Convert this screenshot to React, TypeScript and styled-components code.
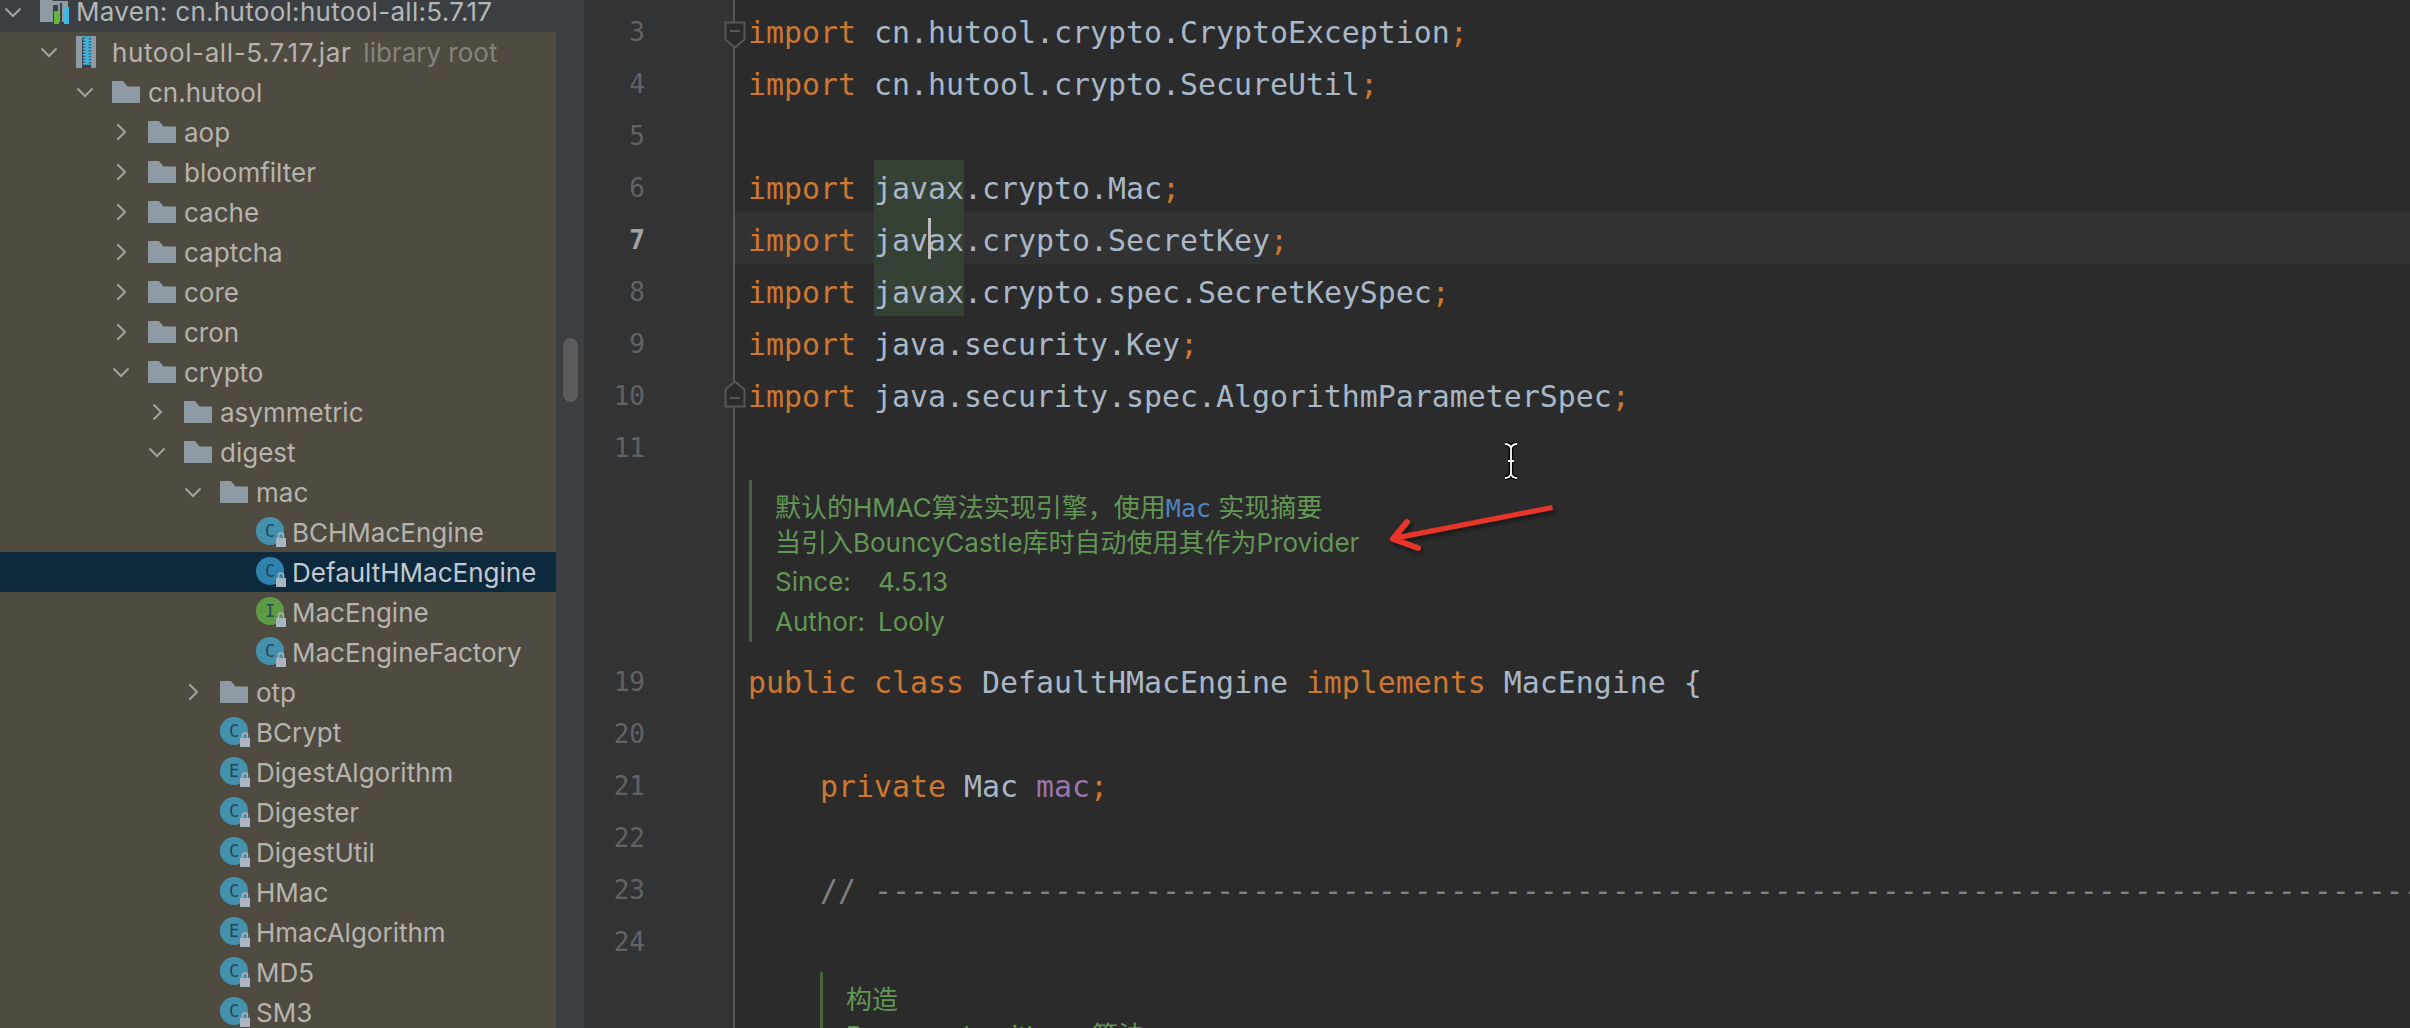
import React from 'react';
import styled, { createGlobalStyle } from 'styled-components';

const GlobalStyle = createGlobalStyle`
  html, body {
    margin: 0;
    padding: 0;
    background: #2b2b2b;
  }
  * {
    box-sizing: border-box;
  }
`;

const uiFont = `Inter, "Noto Sans CJK SC", sans-serif`;
const monoFont = `"DejaVu Sans Mono", "Noto Sans CJK SC", monospace`;

// Page shell
const Page = styled.div`
  position: relative;
  display: flex;
  width: 2410px;
  height: 1028px;
  overflow: hidden;
  background: #2b2b2b;
`;

// Project tree
const Sidebar = styled.div`
  display: flex;
  flex: 0 0 584px;
  background: #3c3f41;
`;

const TreePanel = styled.div`
  flex: 0 0 556px;
  font-family: ${uiFont};
  font-size: 26px;
`;

const TreeBody = styled.div`
  background: #4f4b41;
`;

const TreeRow = styled.div<{ $level: number; $selected?: boolean }>`
  display: flex;
  align-items: center;
  height: 40px;
  padding-left: ${(p) => p.$level * 36}px;
  white-space: nowrap;
  color: ${(p) => (p.$selected ? '#c3c9ce' : '#b6b4ae')};
  background: ${(p) => (p.$selected ? '#0d293e' : 'transparent')};
`;

const HeaderRow = styled(TreeRow)`
  height: 32px;
  padding-bottom: 8px;
  line-height: 24px;
`;

const ChevronSlot = styled.div`
  display: flex;
  flex: 0 0 40px;
  justify-content: center;
  padding-right: 14px;
`;

const IconSlot = styled.div`
  display: flex;
  flex: 0 0 36px;
  align-items: center;
`;

const TreeLabel = styled.span<{ $spacing?: number }>`
  padding-top: 1px;
  letter-spacing: ${(p) => p.$spacing ?? 0}px;
`;

const HeaderLabel = styled.span`
  color: #b4b7b8;
  letter-spacing: 0.3px;
`;

const Hint = styled.span`
  margin-left: 12px;
  padding-top: 1px;
  color: #85837c;
`;

const Badge = styled.div<{ $bg: string }>`
  position: relative;
  display: flex;
  align-items: center;
  justify-content: center;
  width: 28px;
  height: 28px;
  margin-top: -3px;
  border-radius: 50%;
  background: ${(p) => p.$bg};
  color: #24475a;
  font-family: ${monoFont};
  font-size: 17px;
`;

const LockMark = styled.svg`
  position: absolute;
  top: 15px;
  left: 20px;
`;

const ScrollStrip = styled.div`
  flex: 0 0 28px;
  padding: 337px 5px 0 6px;
`;

const ScrollThumb = styled.div`
  width: 17px;
  height: 66px;
  border: 1px solid #37393b;
  border-radius: 9px;
  background: #5a5b5d;
`;

// Line numbers
const Gutter = styled.div`
  flex: 0 0 151px;
  padding: 4px 88px 0 0;
  border-right: 2px solid #555658;
  background: #323335;
  color: #606366;
  font-family: ${monoFont};
  font-size: 26px;
  text-align: right;
`;

const LineNo = styled.div<{ $current?: boolean; $gap?: number }>`
  height: 52px;
  margin-bottom: ${(p) => p.$gap ?? 0}px;
  line-height: 57px;
  color: ${(p) => (p.$current ? '#a4a3a3' : '#606366')};
  font-weight: ${(p) => (p.$current ? 700 : 400)};
`;

// Editor
const Editor = styled.div`
  flex: 1;
  padding-top: 4px;
  font-family: ${monoFont};
  font-size: 29.9px;
  color: #a9b7c6;
`;

const CodeLine = styled.div<{ $current?: boolean }>`
  position: relative;
  height: 52px;
  padding-left: 13px;
  line-height: 57px;
  white-space: pre;
  background: ${(p) => (p.$current ? '#323232' : 'transparent')};
`;

const Kw = styled.span`
  color: #cc7832;
`;

const FieldName = styled.span`
  color: #9876aa;
`;

const Comment = styled.span`
  color: #808080;
`;

const Match = styled.span`
  position: relative;
  display: inline-block;
  height: 52px;
  background: #344134;
`;

const Caret = styled.i`
  position: absolute;
  top: 6px;
  left: 54px;
  width: 3px;
  height: 41px;
  background: #bbbbbb;
`;

const FoldMark = styled.svg<{ $top: number }>`
  position: absolute;
  top: ${(p) => p.$top}px;
  left: -11px;
`;

const DocBlock = styled.div<{ $indent: number; $top: number; $bottom: number }>`
  margin: ${(p) => p.$top}px 0 ${(p) => p.$bottom}px ${(p) => p.$indent}px;
  border-left: 3px solid #47643f;
  color: #629755;
  font-family: ${uiFont};
  font-size: 26px;
  white-space: nowrap;
`;

const DocText = styled.div`
  height: 35px;
  padding-left: 23px;
  line-height: 35px;
`;

const DocLead = styled.div<{ $top: number; $height: number }>`
  height: ${(p) => p.$height}px;
  padding-top: ${(p) => p.$top}px;
`;

const DocTag = styled.div`
  display: flex;
  height: 40px;
  padding-left: 23px;
  line-height: 40px;
`;

const DocTagLabel = styled.span`
  flex: 0 0 103px;
`;

const DocLink = styled.span`
  color: #4f86c6;
  font-family: ${monoFont};
  font-size: 25px;
`;

// Annotations sitting on top of the screenshot
const MouseCursor = styled.svg`
  position: absolute;
  top: 442px;
  left: 1502px;
`;

const RedArrow = styled.svg`
  position: absolute;
  top: 495px;
  left: 1380px;
  filter: drop-shadow(2px 3px 2px rgba(0, 0, 0, 0.45));
`;

const ChevronDown = () => (
  <svg width="18" height="11" viewBox="0 0 18 11" fill="none">
    <path d="M1.5 1.5 9 9l7.5-7.5" stroke="#a3a3a0" strokeWidth="2" />
  </svg>
);

const ChevronRight = () => (
  <svg width="11" height="18" viewBox="0 0 11 18" fill="none">
    <path d="M1.5 1.5 9 9l-7.5 7.5" stroke="#a3a3a0" strokeWidth="2" />
  </svg>
);

const FolderIcon = () => (
  <svg width="28" height="22" viewBox="0 0 28 22">
    <path d="M0 0h11l4.5 5.5H28V22H0z" fill="#8f9ba4" />
  </svg>
);

const MavenIcon = () => (
  <svg width="30" height="24" viewBox="0 3 30 24">
    <path d="M0 0h9l4 4h15v21H0z" fill="#8f9ba4" />
    <rect x="13" y="8" width="5" height="17" fill="#3e4144" />
    <rect x="14" y="14" width="5" height="13" fill="#62b543" />
    <rect x="20" y="6" width="2" height="21" fill="#3e4144" />
    <rect x="24" y="10" width="5" height="17" fill="#40b6e0" />
  </svg>
);

const JarIcon = () => (
  <svg width="20" height="32" viewBox="0 0 20 32">
    <rect width="20" height="32" fill="#8f9ba4" />
    <rect x="6" width="9" height="32" fill="#3c3f41" />
    <path
      d="M6 1h9L7 4h8L7 7h8l-8 3h8l-8 3h8l-8 3h8l-8 3h8l-8 3h8l-8 3h8l-8 3h8"
      fill="none"
      stroke="#40b6e0"
      strokeWidth="1.6"
    />
  </svg>
);

type BadgeKind = 'C' | 'E' | 'I';

const ClassBadge = ({ kind, selected }: { kind: BadgeKind; selected?: boolean }) => {
  const bg = kind === 'I' ? '#5d9b42' : selected ? '#2f82ad' : '#4491ae';
  return (
    <Badge $bg={bg}>
      {kind}
      <LockMark width="10" height="15" viewBox="0 0 10 15">
        <path d="M2.5 7V3.5a2.5 2.5 0 0 1 5 0V7" fill="none" stroke="#a9b5c0" strokeWidth="1.6" />
        <rect y="6" width="10" height="9" fill="#a9b5c0" />
      </LockMark>
    </Badge>
  );
};

type Node = {
  level: number;
  label: string;
  open?: boolean;
  badge?: BadgeKind;
  selected?: boolean;
};

const nodes: Node[] = [
  { level: 2, label: 'cn.hutool', open: true },
  { level: 3, label: 'aop', open: false },
  { level: 3, label: 'bloomfilter', open: false },
  { level: 3, label: 'cache', open: false },
  { level: 3, label: 'captcha', open: false },
  { level: 3, label: 'core', open: false },
  { level: 3, label: 'cron', open: false },
  { level: 3, label: 'crypto', open: true },
  { level: 4, label: 'asymmetric', open: false },
  { level: 4, label: 'digest', open: true },
  { level: 5, label: 'mac', open: true },
  { level: 6, label: 'BCHMacEngine', badge: 'C' },
  { level: 6, label: 'DefaultHMacEngine', badge: 'C', selected: true },
  { level: 6, label: 'MacEngine', badge: 'I' },
  { level: 6, label: 'MacEngineFactory', badge: 'C' },
  { level: 5, label: 'otp', open: false },
  { level: 5, label: 'BCrypt', badge: 'C' },
  { level: 5, label: 'DigestAlgorithm', badge: 'E' },
  { level: 5, label: 'Digester', badge: 'C' },
  { level: 5, label: 'DigestUtil', badge: 'C' },
  { level: 5, label: 'HMac', badge: 'C' },
  { level: 5, label: 'HmacAlgorithm', badge: 'E' },
  { level: 5, label: 'MD5', badge: 'C' },
  { level: 5, label: 'SM3', badge: 'C' },
];

const Fold = ({ up, top }: { up?: boolean; top: number }) => (
  <FoldMark $top={top} width="22" height="28" viewBox="0 0 22 28">
    <path
      d={up ? 'M1.5 26.5V9.5L11 1.5l9.5 8v17z' : 'M1.5 1.5h19v17L11 26.5l-9.5-8z'}
      fill="#2b2b2b"
      stroke="#555658"
      strokeWidth="2"
    />
    <path d={up ? 'M6 18h10' : 'M6 10h10'} stroke="#555658" strokeWidth="2" />
  </FoldMark>
);

const lineNumbers = [3, 4, 5, 6, 7, 8, 9, 10, 11, 19, 20, 21, 22, 23, 24];

const beamPath = 'M3 2c3 0 5 1 6 4v26c-1 3-3 4-6 4M15 2c-3 0-5 1-6 4v26c1 3 3 4 6 4M6 19h6';

export default function App() {
  return (
    <Page>
      <GlobalStyle />
      <Sidebar>
        <TreePanel>
          <HeaderRow $level={0}>
            <ChevronSlot>
              <ChevronDown />
            </ChevronSlot>
            <IconSlot>
              <MavenIcon />
            </IconSlot>
            <HeaderLabel>Maven: cn.hutool:hutool-all:5.7.17</HeaderLabel>
          </HeaderRow>
          <TreeBody>
            <TreeRow $level={1}>
              <ChevronSlot>
                <ChevronDown />
              </ChevronSlot>
              <IconSlot>
                <JarIcon />
              </IconSlot>
              <TreeLabel $spacing={0.6}>hutool-all-5.7.17.jar</TreeLabel>
              <Hint>library root</Hint>
            </TreeRow>
            {nodes.map((node) => (
              <TreeRow key={node.label} $level={node.level} $selected={node.selected}>
                <ChevronSlot>
                  {node.open === true && <ChevronDown />}
                  {node.open === false && <ChevronRight />}
                </ChevronSlot>
                <IconSlot>
                  {node.badge ? (
                    <ClassBadge kind={node.badge} selected={node.selected} />
                  ) : (
                    <FolderIcon />
                  )}
                </IconSlot>
                <TreeLabel>{node.label}</TreeLabel>
              </TreeRow>
            ))}
          </TreeBody>
        </TreePanel>
        <ScrollStrip>
          <ScrollThumb />
        </ScrollStrip>
      </Sidebar>

      <Gutter>
        {lineNumbers.map((n) => (
          <LineNo key={n} $current={n === 7} $gap={n === 11 ? 182 : 0}>
            {n}
          </LineNo>
        ))}
      </Gutter>

      <Editor>
        <CodeLine>
          <Fold top={17} />
          <Kw>import</Kw> cn.hutool.crypto.CryptoException<Kw>;</Kw>
        </CodeLine>
        <CodeLine>
          <Kw>import</Kw> cn.hutool.crypto.SecureUtil<Kw>;</Kw>
        </CodeLine>
        <CodeLine />
        <CodeLine>
          <Kw>import</Kw> <Match>javax</Match>.crypto.Mac<Kw>;</Kw>
        </CodeLine>
        <CodeLine $current>
          <Kw>import</Kw>{' '}
          <Match>
            javax
            <Caret />
          </Match>
          .crypto.SecretKey<Kw>;</Kw>
        </CodeLine>
        <CodeLine>
          <Kw>import</Kw> <Match>javax</Match>.crypto.spec.SecretKeySpec<Kw>;</Kw>
        </CodeLine>
        <CodeLine>
          <Kw>import</Kw> java.security.Key<Kw>;</Kw>
        </CodeLine>
        <CodeLine>
          <Fold up top={12} />
          <Kw>import</Kw> java.security.spec.AlgorithmParameterSpec<Kw>;</Kw>
        </CodeLine>
        <CodeLine />

        <DocBlock $indent={14} $top={8} $bottom={12}>
          <DocLead $top={10} $height={82}>
            <DocText>
              默认的HMAC算法实现引擎，使用<DocLink>Mac</DocLink> 实现摘要
            </DocText>
            <DocText>当引入BouncyCastle库时自动使用其作为Provider</DocText>
          </DocLead>
          <DocTag>
            <DocTagLabel>Since:</DocTagLabel>
            4.5.13
          </DocTag>
          <DocTag>
            <DocTagLabel>Author:</DocTagLabel>
            Looly
          </DocTag>
        </DocBlock>

        <CodeLine>
          <Kw>public class</Kw> DefaultHMacEngine <Kw>implements</Kw> MacEngine {'{'}
        </CodeLine>
        <CodeLine />
        <CodeLine>
          {'    '}
          <Kw>private</Kw> Mac <FieldName>mac</FieldName>
          <Kw>;</Kw>
        </CodeLine>
        <CodeLine />
        <CodeLine>
          {'    '}
          <Comment>// {'-'.repeat(100)}</Comment>
        </CodeLine>
        <CodeLine />

        <DocBlock $indent={85} $top={6} $bottom={0}>
          <DocLead $top={10} $height={44}>
            <DocText>构造</DocText>
          </DocLead>
          <DocTag>
            <DocTagLabel>Params:</DocTagLabel>
            algorithm – 算法
          </DocTag>
        </DocBlock>
      </Editor>

      <MouseCursor width="18" height="38" viewBox="0 0 18 38">
        <path d={beamPath} fill="none" stroke="#000000" strokeWidth="4.5" />
        <path d={beamPath} fill="none" stroke="#ffffff" strokeWidth="1.8" />
      </MouseCursor>

      <RedArrow width="190" height="70" viewBox="0 0 190 70">
        <path d="M172 10 173 15 14 46 12 41z" fill="#e8352a" />
        <path
          d="M27 27 13 44l25 9"
          fill="none"
          stroke="#e8352a"
          strokeWidth="6"
          strokeLinecap="round"
          strokeLinejoin="round"
        />
      </RedArrow>
    </Page>
  );
}
